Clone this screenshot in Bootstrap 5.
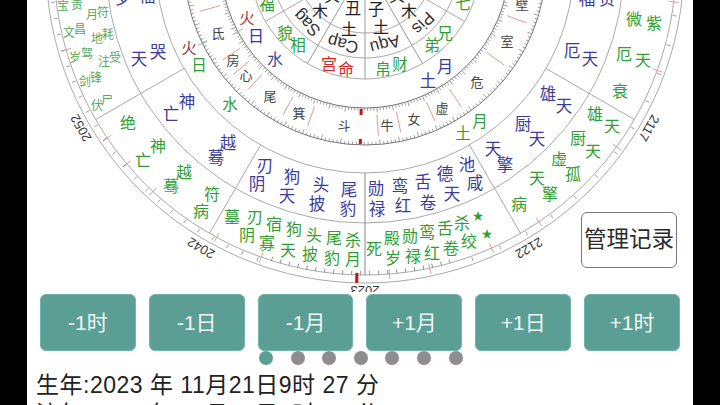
<!DOCTYPE html>
<html lang="zh">
<head>
<meta charset="utf-8">
<title>命盘</title>
<link rel="stylesheet" href="https://cdn.jsdelivr.net/npm/bootstrap@5.3.0/dist/css/bootstrap.min.css">
<style>
html,body{height:405px;overflow:hidden;background:#000;}
body{font-family:"Liberation Sans","Noto Sans CJK SC",sans-serif;}
.sheet{width:666px;height:405px;overflow:hidden;background:#fff;}
.chart-box{height:294px;}
.chart-box svg{display:block;width:666px;height:292px;}
.chart-box text{font-family:"Noto Sans CJK SC",sans-serif;text-anchor:middle;dominant-baseline:central;}
.chart-box text.latin{font-family:"Liberation Sans",sans-serif;}
.manage-btn{left:554px;top:212px;width:96px;height:56px;border:1px solid #777;border-radius:6px;background:#fff;color:#2b2b2b;font-size:22.5px;line-height:1;white-space:nowrap;}
.step-row{padding:0 13px;gap:13px;}
.step-btn{flex:1 1 0;height:57px;border-radius:6px;background:#5b9e94;border:1px solid #6fb5aa;color:#eef7f5;font-size:21px;padding:0;}
.pager{margin:0 0 0 232px;height:14px;gap:17.6px;}
.pager-dot{width:14px;height:14px;border-radius:50%;background:#8e8c8f;}
.pager-dot.on{background:#5b9e94;}
.birth{padding-left:9px;font-size:23px;letter-spacing:.5px;line-height:29px;color:#222;white-space:nowrap;}
.birth-list{padding-top:6px;}
</style>
</head>
<body class="d-flex justify-content-center m-0">
<main class="sheet">
  <div class="chart-box position-relative">
    <svg id="wheel" viewBox="27 0 666 292" xmlns="http://www.w3.org/2000/svg"></svg>
    <div class="manage-btn position-absolute d-flex align-items-center justify-content-center">管理记录</div>
  </div>
  <div class="step-row d-flex">
    <button class="btn step-btn">-1时</button>
    <button class="btn step-btn">-1日</button>
    <button class="btn step-btn">-1月</button>
    <button class="btn step-btn">+1月</button>
    <button class="btn step-btn">+1日</button>
    <button class="btn step-btn">+1时</button>
  </div>
  <div class="pager d-flex">
    <span class="pager-dot on"></span><span class="pager-dot"></span><span class="pager-dot"></span><span class="pager-dot"></span><span class="pager-dot"></span><span class="pager-dot"></span><span class="pager-dot"></span>
  </div>
  <div class="birth-list">
    <div class="birth">生年:2023 年 11月21日9时 27 分</div>
    <div class="birth">流年:2023 年 11月21日9时 27 分</div>
  </div>
</main>
<script src="https://cdn.jsdelivr.net/npm/bootstrap@5.3.0/dist/js/bootstrap.bundle.min.js"></script>
<script>
(function(){
  var NS='http://www.w3.org/2000/svg',svg=document.getElementById('wheel'),CX=365,CY=-36;
  function el(n,a,t){var e=document.createElementNS(NS,n);for(var k in a)e.setAttribute(k,a[k]);if(t)e.textContent=t;svg.appendChild(e);return e;}
  function pt(a,r){var t=a*Math.PI/180;return [CX+r*Math.sin(t),CY+r*Math.cos(t)];}
  function spoke(a,r1,r2,c,w){var p=pt(a,r1),q=pt(a,r2);el('line',{x1:p[0].toFixed(2),y1:p[1].toFixed(2),x2:q[0].toFixed(2),y2:q[1].toFixed(2),stroke:c,'stroke-width':w});}
  [[69,'#aaa'],[94,'#aaa'],[115,'#aaa'],[144,'#777'],[181,'#777'],[209,'#aaa'],[259,'#aaa'],[311,'#aaa'],[319,'#aaa']].forEach(function(c){
    el('circle',{cx:CX,cy:CY,r:c[0],fill:'none',stroke:c[1],'stroke-width':1});
  });
  var i,a;
  for(i=-1;i<=1;i++){spoke(i*30,0,115,'#999',1);}
  spoke(-60,40,115,'#aaa',1);spoke(60,40,115,'#aaa',1);
  spoke(0,209,311,'#888',1);
  [-60,-30,30,60].forEach(function(x){spoke(x,209,311,'#aaa',1);});
  for(i=-72;i<=72;i++){
    a=-1.5+i*1.25;
    var big=i%5===0;
    spoke(a,144,big?149:147,'#777',.7);
    spoke(a,181,big?176:178,'#777',.7);
  }
  spoke(-62,138,150,'#999',.8);spoke(-64,176,186,'#999',.8);
  var mans=[-86,-74,-56,-50,-43,-28.5,-19.5,4.5,12,24,34,54,70,83];
  mans.forEach(function(m){spoke(m,151,172,'#e29a96',1);spoke(m,306,316,'#e29a96',1);});
  for(a=-17;a<=17;a+=1.67){spoke(a-.5,307,311,'#777',.8);}
  for(a=-20;a>=-88;a-=3){spoke(a,312,316,'#888',.8);}
  for(a=20;a<=88;a+=5.5){spoke(a,312,316,'#888',.8);}
  spoke(-1.5,145,151,'#c8111a',3);spoke(-1.5,175,180,'#c8111a',3);spoke(-1.5,309,319,'#c8111a',3);
  [[-60,'2052',328],[-30,'2042',328],[0,'2023',326],[30,'2122',328],[60,'2117',328]].forEach(function(l){
    var p=pt(l[0],l[2]);
    el('text',{class:'latin',x:p[0],y:p[1],'font-size':13,fill:'#333',transform:'rotate('+(180-l[0])+' '+p[0]+' '+p[1]+')'},l[1]);
  });
  [['Sag',307,23,225],['Cap',343,44,195],['Aqu',385,44,165],['Pis',423,23,135]].forEach(function(s){
    el('text',{class:'latin',x:s[1],y:s[2],'font-size':17,fill:'#333',transform:'rotate('+s[3]+' '+s[1]+' '+s[2]+')'},s[0]);
  });
  function put(col,size,str){
    str.trim().split(/\s+/).forEach(function(t){var m=t.split(',');el('text',{x:m[1],y:m[2],'font-size':size,fill:col},m[0]);});
  }
  var B='#3c3c9c',G='#2f9f35';
  put('#58a85c',12,'宝,63,4 贵,77,3 月,92,13 符,103,11 文,69,31 昌,80,28 地,97,37 耗,108,33 岁,75,56 驾,87,52 注,104,60 受,115,56 剑,85,80 锋,96,76 伏,97,104 尸,107,99');
  put('#444',13,'氐,218,32 房,233,59 心,246,74 尾,270,95 箕,299,112 斗,344,124 牛,387,124 女,414,118 虚,442,107 危,477,81 室,507,40 壁,522,3');
  put('#222',16,'丑,353,7 土,349,28 子,376,8 土,381,26 木,320,10 木,409,10 癸,332,-6 癸,397,-6');
  put('#d22',16,'宫,329,63 命,346,68');
  put(G,15.5,'帛,383,68 财,400,63 貌,285,32 相,298,44 弟,432,44 兄,445,32 福,267,3 七,463,2 日,199,64 水,230,103 土,463,132 月,480,120');
  put('#9c3a3a',15.5,'火,189,47');
  put('#b33',15.5,'火,247,17');
  put('#3333c0',16,'日,256,35');
  put('#4848a0',16,'水,275,58');
  put(B,16.5,'土,428,80 月,445,66 天,139,58 哭,158,51 岁,123,-3 福,147,-5 神,187,101 亡,171,113 越,228,142 蓦,216,157 天,493,148 擎,505,164 池,467,164 咸,475,182 德,445,173 天,452,193 舌,423,181 卷,428,202 鸾,400,185 红,403,205 勋,376,188 禄,377,208 刃,265,165 阴,257,183 狗,292,176 天,287,195 头,321,184 披,317,203 尾,349,189 豹,348,208 雄,548,93 天,564,105 厄,572,50 天,590,58 厨,523,123 天,537,138 福,587,-2 贵,607,-2');
  put(G,16,'绝,128,122 神,158,145 亡,143,159 越,184,171 蓦,171,185 符,212,193 病,201,210 墓,232,216 刃,255,216 阴,247,234 宿,274,223 寡,267,242 狗,294,228 天,288,249 头,314,234 披,310,253 尾,334,237 豹,332,257 杀,353,239 月,353,258 死,374,248 殿,392,237 岁,393,257 勋,410,235 禄,413,255 鸾,427,231 红,432,252 舌,445,227 卷,451,247 杀,462,222 绞,469,240 病,519,203 天,537,177 擎,550,193 虚,559,158 孤,573,173 天,593,150 厨,578,137 雄,595,113 天,612,125 衰,620,90 厄,624,53 天,643,59 微,634,18 紫,654,22');
  put(G,11,'★,478,215 ★,487,233');
})();
</script>
</body>
</html>
